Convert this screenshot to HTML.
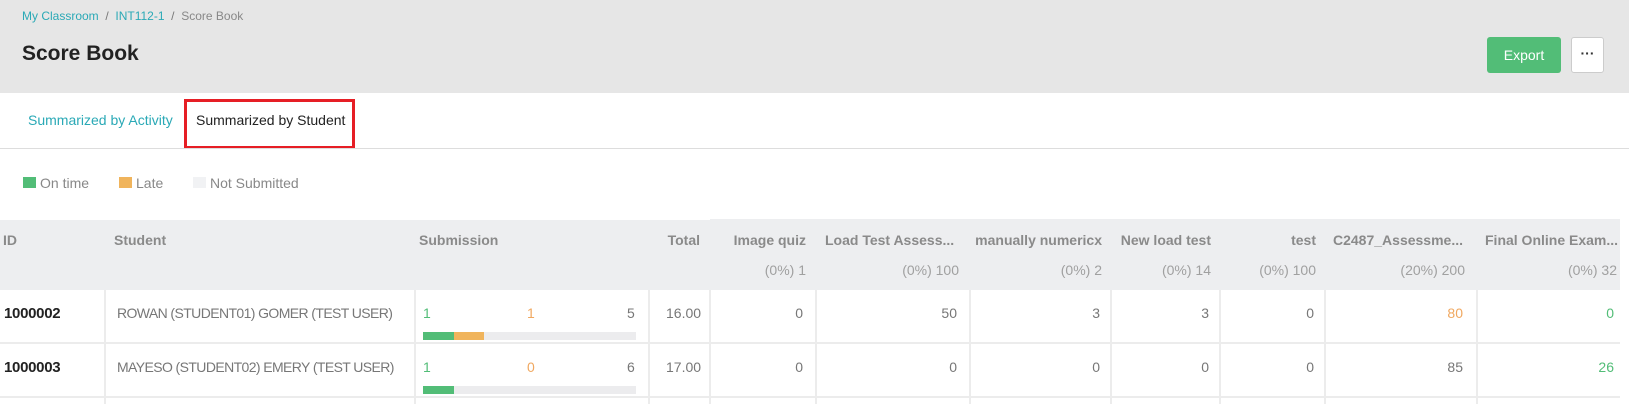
<!DOCTYPE html>
<html><head><meta charset="utf-8"><style>
*{margin:0;padding:0;box-sizing:border-box}
body{width:1629px;height:404px;overflow:hidden;background:#fff;font-family:"Liberation Sans",sans-serif;position:relative;color:#777}
.a{position:absolute;white-space:nowrap}
.hdr{position:absolute;left:0;top:0;width:1629px;height:93px;background:#e6e6e6}
.th{position:absolute;top:220px;height:70px;background:#edeef0}
.r{position:absolute;left:0;width:1620px;height:2px;background:#ececec}
.v{position:absolute;width:2px;background:#ececec;top:290px;height:114px}
.ht{font-size:14px;font-weight:bold;color:#8a8a8a;top:232px}
.hs{font-size:14px;color:#a0a0a0;top:262px}
.c{font-size:14px;color:#777}
.id{font-size:15px;font-weight:bold;color:#222;letter-spacing:-0.3px}
.nm{letter-spacing:-0.6px}
</style></head><body>
<div class="hdr"></div>
<div class="a" style="left:22px;top:9px;font-size:12px;color:#2aa9b6">My Classroom <span style="color:#777">&nbsp;/&nbsp;</span> INT112-1 <span style="color:#777">&nbsp;/&nbsp;</span> <span style="color:#888">Score Book</span></div>
<div class="a" style="left:22px;top:42px;font-size:21px;font-weight:bold;color:#222">Score Book</div>
<div class="a" style="left:1487px;top:37px;width:74px;height:36px;background:#52bd77;border-radius:3px;color:#fff;font-size:14px;line-height:36px;text-align:center">Export</div>
<div class="a" style="left:1571px;top:37px;width:33px;height:36px;background:#fff;border:1px solid #ccc;border-radius:3px;color:#333;font-size:14px;line-height:30px;text-align:center;font-weight:bold">···</div>
<div class="a" style="left:28px;top:112px;font-size:14px;color:#2aa9b6">Summarized by Activity</div>
<div class="a" style="left:184px;top:99px;width:171px;height:50px;border:3px solid #e61e25"></div>
<div class="a" style="left:196px;top:112px;font-size:14px;color:#222">Summarized by Student</div>
<div class="a" style="left:0;top:148px;width:1629px;height:1px;background:#ddd"></div>
<div class="a" style="left:23px;top:177px;width:13px;height:11px;background:#52bd77"></div>
<div class="a c" style="left:40px;top:175px;color:#888">On time</div>
<div class="a" style="left:119px;top:177px;width:13px;height:11px;background:#f0b45c"></div>
<div class="a c" style="left:136px;top:175px;color:#888">Late</div>
<div class="a" style="left:193px;top:177px;width:13px;height:11px;background:#f1f2f4"></div>
<div class="a c" style="left:210px;top:175px;color:#888">Not Submitted</div>

<div class="th" style="left:0;width:710px"></div>
<div class="th" style="left:710px;top:219px;width:910px;height:71px"></div>
<div class="a ht" style="left:3px">ID</div>
<div class="a ht" style="left:114px">Student</div>
<div class="a ht" style="left:419px">Submission</div>
<div class="a ht" style="left:600px;width:100px;text-align:right">Total</div>
<div class="a ht" style="left:700px;width:106px;text-align:right">Image quiz</div>
<div class="a hs" style="left:700px;width:106px;text-align:right">(0%) 1</div>
<div class="a ht" style="left:825px">Load Test Assess...</div>
<div class="a hs" style="left:820px;width:139px;text-align:right">(0%) 100</div>
<div class="a ht" style="left:970px;width:132px;text-align:right">manually numericx</div>
<div class="a hs" style="left:970px;width:132px;text-align:right">(0%) 2</div>
<div class="a ht" style="left:1114px;width:97px;text-align:right">New load test</div>
<div class="a hs" style="left:1114px;width:97px;text-align:right">(0%) 14</div>
<div class="a ht" style="left:1224px;width:92px;text-align:right">test</div>
<div class="a hs" style="left:1224px;width:92px;text-align:right">(0%) 100</div>
<div class="a ht" style="left:1333px">C2487_Assessme...</div>
<div class="a hs" style="left:1330px;width:135px;text-align:right">(20%) 200</div>
<div class="a ht" style="left:1485px">Final Online Exam...</div>
<div class="a hs" style="left:1480px;width:137px;text-align:right">(0%) 32</div>

<div class="r" style="top:342px"></div>
<div class="r" style="top:396px"></div>
<div class="v" style="left:104px"></div>
<div class="v" style="left:414px"></div>
<div class="v" style="left:648px"></div>
<div class="v" style="left:709px"></div>
<div class="v" style="left:815px"></div>
<div class="v" style="left:969px"></div>
<div class="v" style="left:1110px"></div>
<div class="v" style="left:1219px"></div>
<div class="v" style="left:1324px"></div>
<div class="v" style="left:1476px"></div>

<div class="a id" style="left:4px;top:305px">1000002</div>
<div class="a c nm" style="left:117px;top:305px">ROWAN (STUDENT01) GOMER (TEST USER)</div>
<div class="a c" style="left:423px;top:305px;color:#52bd77">1</div>
<div class="a c" style="left:527px;top:305px;color:#f0a860">1</div>
<div class="a c" style="left:627px;top:305px">5</div>
<div class="a" style="left:423px;top:332px;width:213px;height:8px;background:#ececee"></div>
<div class="a" style="left:423px;top:332px;width:31px;height:8px;background:#52bd77"></div>
<div class="a" style="left:454px;top:332px;width:30px;height:8px;background:#f0b45c"></div>
<div class="a c" style="left:666px;top:305px">16.00</div>
<div class="a c" style="left:700px;top:305px;width:103px;text-align:right">0</div>
<div class="a c" style="left:820px;top:305px;width:137px;text-align:right">50</div>
<div class="a c" style="left:970px;top:305px;width:130px;text-align:right">3</div>
<div class="a c" style="left:1114px;top:305px;width:95px;text-align:right">3</div>
<div class="a c" style="left:1224px;top:305px;width:90px;text-align:right">0</div>
<div class="a c" style="left:1330px;top:305px;width:133px;text-align:right;color:#f0a860">80</div>
<div class="a c" style="left:1480px;top:305px;width:134px;text-align:right;color:#52bd77">0</div>

<div class="a id" style="left:4px;top:359px">1000003</div>
<div class="a c nm" style="left:117px;top:359px">MAYESO (STUDENT02) EMERY (TEST USER)</div>
<div class="a c" style="left:423px;top:359px;color:#52bd77">1</div>
<div class="a c" style="left:527px;top:359px;color:#f0a860">0</div>
<div class="a c" style="left:627px;top:359px">6</div>
<div class="a" style="left:423px;top:386px;width:213px;height:8px;background:#ececee"></div>
<div class="a" style="left:423px;top:386px;width:31px;height:8px;background:#52bd77"></div>
<div class="a c" style="left:666px;top:359px">17.00</div>
<div class="a c" style="left:700px;top:359px;width:103px;text-align:right">0</div>
<div class="a c" style="left:820px;top:359px;width:137px;text-align:right">0</div>
<div class="a c" style="left:970px;top:359px;width:130px;text-align:right">0</div>
<div class="a c" style="left:1114px;top:359px;width:95px;text-align:right">0</div>
<div class="a c" style="left:1224px;top:359px;width:90px;text-align:right">0</div>
<div class="a c" style="left:1330px;top:359px;width:133px;text-align:right">85</div>
<div class="a c" style="left:1480px;top:359px;width:134px;text-align:right;color:#52bd77">26</div>
</body></html>
